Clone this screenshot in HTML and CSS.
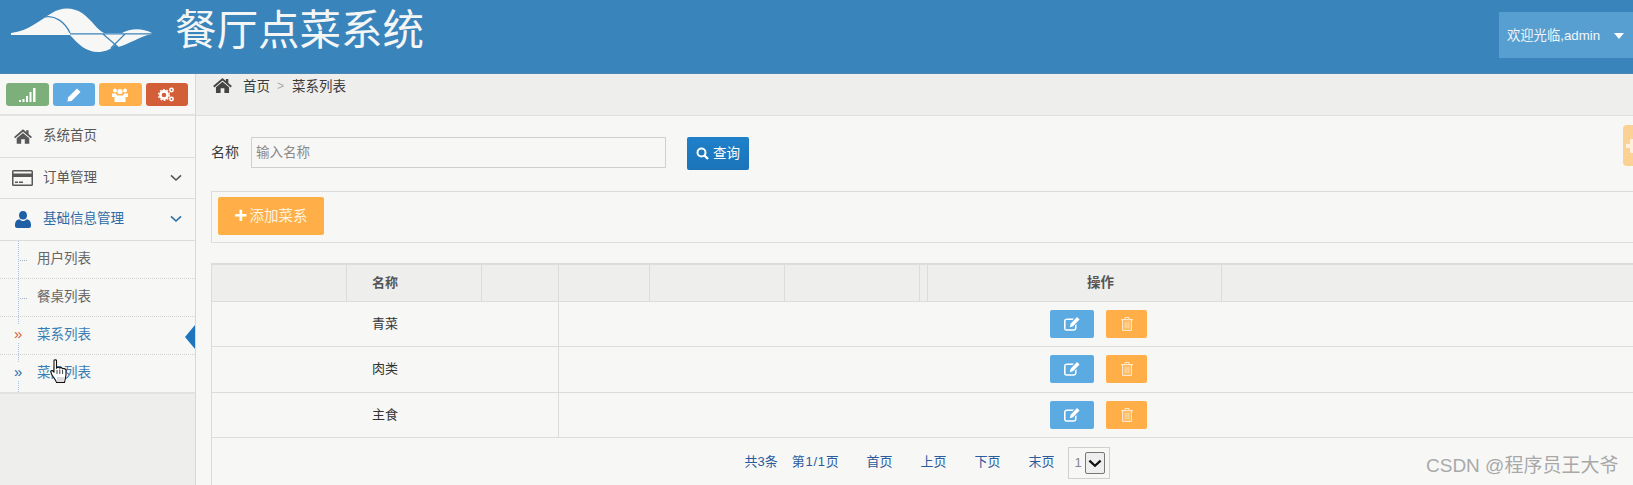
FILE: index.html
```html
<!DOCTYPE html>
<html lang="zh-CN">
<head>
<meta charset="utf-8">
<title>餐厅点菜系统</title>
<link rel="stylesheet" href="styles.css">
</head>
<body>
<svg class="sprites" width="0" height="0" aria-hidden="true">
  <symbol id="i-home" viewBox="0 0 20 16"><path d="M10 0 L13.6 3.1 V1 H16.2 V5.3 L20 8.6 L18.7 10 L10 2.6 L1.3 10 L0 8.6 Z M10 4 L17 9.9 V16 H12 V11 H8 V16 H3 V9.9 Z"/></symbol>
  <symbol id="i-card" viewBox="0 0 21 16"><path fill-rule="evenodd" d="M1.5 0 H19.5 A1.5 1.5 0 0 1 21 1.5 V14.5 A1.5 1.5 0 0 1 19.5 16 H1.5 A1.5 1.5 0 0 1 0 14.5 V1.5 A1.5 1.5 0 0 1 1.5 0 Z M1.5 1.5 V3.5 H19.5 V1.5 Z M1.5 7 V14.5 H19.5 V7 Z M3 11.5 H6 V13 H3 Z M7 11.5 H11 V13 H7 Z"/></symbol>
  <symbol id="i-user" viewBox="0 0 16 17"><path d="M8 0 C10.6 0 12 2 12 4.4 C12 6.6 10.8 8.6 8 8.6 C5.2 8.6 4 6.6 4 4.4 C4 2 5.4 0 8 0 Z M4.4 8.2 C5.4 9.4 6.6 10 8 10 C9.4 10 10.6 9.4 11.6 8.2 C14.2 8.6 16 10.4 16 13.4 V15 C16 16.2 15 17 14 17 H2 C1 17 0 16.2 0 15 V13.4 C0 10.4 1.8 8.6 4.4 8.2 Z"/></symbol>
  <symbol id="i-chev" viewBox="0 0 12 8"><path d="M1 1.4 L6 6 L11 1.4" fill="none" stroke="currentColor" stroke-width="1.6"/></symbol>
  <symbol id="i-edit" viewBox="0 0 16 14"><path d="M2.5 1.5 H10 L8.6 3 H2.8 A1 1 0 0 0 1.6 4 V11 A1 1 0 0 0 2.8 12.2 H10 A1 1 0 0 0 11 11 V8.4 L12.5 7 V11 A2.6 2.6 0 0 1 10 13.7 H2.6 A2.6 2.6 0 0 1 0 11 V4 A2.6 2.6 0 0 1 2.5 1.5 Z M13 0 L15.6 2.5 L9 9.3 L5.8 10.2 L6.6 6.8 Z"/></symbol>
  <symbol id="i-trash" viewBox="0 0 12 14"><path fill-rule="evenodd" d="M4 0 H8 L9 2 H12 V3.2 H11 V12.4 C11 13.4 10.4 14 9.6 14 H2.4 C1.6 14 1 13.4 1 12.4 V3.2 H0 V2 H3 Z M4.6 1 L4.2 2 H7.8 L7.4 1 Z M2.2 3.2 V12.8 H9.8 V3.2 Z M3.6 4.6 H4.6 V11.6 H3.6 Z M5.5 4.6 H6.5 V11.6 H5.5 Z M7.4 4.6 H8.4 V11.6 H7.4 Z"/></symbol>
</svg>

<header class="topbar">
  <div class="brand">
    <svg class="logo" viewBox="0 0 141 45" aria-hidden="true">
      <path class="logo-fill" d="M0 25 C18 23 30 11 41 5 C50 -1 62 -1 71 5 C81 12 86 22 93 25 H111 C118 21 130 19 141 25 V26 C129 28 119 36 107 39 L104 37 C99 42 93 44 87 44 C75 44 67 36 59 27 H0 Z"/>
      <path class="logo-line" d="M34 9 C44 7 54 14 59 25 M59 25.8 H141 M92 26 L107 39 M114 26 L100 40"/>
    </svg>
    <h1 class="title">餐厅点菜系统</h1>
  </div>
  <div class="user-menu"><span>欢迎光临,admin</span><i class="caret"></i></div>
</header>

<div class="layout">
  <aside class="sidebar">
    <div class="shortcuts">
      <button class="sc sc-green" type="button" aria-label="统计">
        <svg width="17" height="14" viewBox="0 0 17 14"><path d="M0 12h2v2H0zM3.500 11h2v3h-2zM7 8h2v6H7zM10.500 4h2v10h-2zM14 0h2.500v14H14z"/></svg>
      </button>
      <button class="sc sc-blue" type="button" aria-label="编辑">
        <svg width="14" height="14" viewBox="0 0 14 14"><path d="M10 .5 L13.500 4 L4.500 13 L.5 13.500 L1 9.500 Z"/></svg>
      </button>
      <button class="sc sc-orange" type="button" aria-label="用户">
        <svg width="16" height="14" viewBox="0 0 16 14"><circle cx="3" cy="2.500" r="2"/><circle cx="13" cy="2.500" r="2"/><circle cx="8" cy="3.500" r="2.600"/><path d="M0 5.500h4l1 2h6l1-2h4v3.500h-2.500V14H2.500V9H0z"/></svg>
      </button>
      <button class="sc sc-red" type="button" aria-label="设置">
        <svg width="17" height="15" viewBox="0 0 17 15"><circle cx="6" cy="8" r="3.600" fill="none" stroke="#fff" stroke-width="2.600"/><circle cx="6" cy="8" r="5.400" fill="none" stroke="#fff" stroke-width="1.300" stroke-dasharray="1.800 1.600"/><circle cx="13.500" cy="3" r="1.700" fill="none" stroke="#fff" stroke-width="1.500"/><circle cx="13.500" cy="12" r="1.700" fill="none" stroke="#fff" stroke-width="1.500"/></svg>
      </button>
    </div>
    <nav class="nav">
      <a class="nav-item"><span class="nav-icon"><svg width="18" height="15"><use href="#i-home"/></svg></span><span class="nav-text">系统首页</span></a>
      <a class="nav-item"><span class="nav-icon"><svg width="21" height="16"><use href="#i-card"/></svg></span><span class="nav-text">订单管理</span><svg class="chev" width="12" height="8"><use href="#i-chev"/></svg></a>
      <a class="nav-item is-open"><span class="nav-icon"><svg width="16" height="17"><use href="#i-user"/></svg></span><span class="nav-text">基础信息管理</span><svg class="chev" width="12" height="8"><use href="#i-chev"/></svg></a>
      <ul class="subnav">
        <li class="sub-item"><i class="tick"></i>用户列表</li>
        <li class="sub-item"><i class="tick"></i>餐桌列表</li>
        <li class="sub-item is-active"><i class="dbl">»</i>菜系列表</li>
        <li class="sub-item is-link"><i class="dbl">»</i>菜品列表</li>
      </ul>
    </nav>
  </aside>

  <main class="main">
    <div class="crumbs">
      <svg class="crumb-home" width="19" height="15"><use href="#i-home"/></svg>
      <span>首页</span><span class="crumb-sep">&gt;</span><span>菜系列表</span>
    </div>
    <div class="content">
      <form class="search">
        <label class="search-label" for="q">名称</label>
        <input class="search-input" id="q" placeholder="输入名称">
        <button class="btn-query" type="button">
          <svg width="13" height="13" viewBox="0 0 13 13"><circle cx="5.500" cy="5.500" r="4" fill="none" stroke="#fff" stroke-width="2"/><path d="M8.500 8.500 L12 12" stroke="#fff" stroke-width="2.400"/></svg>查询
        </button>
      </form>
      <div class="toolbar">
        <button class="btn-add" type="button"><span class="plus">+</span>添加菜系</button>
      </div>
      <div class="table">
        <div class="thead">
          <div class="th"></div>
          <div class="th th-name">名称</div>
          <div class="th"></div>
          <div class="th"></div>
          <div class="th"></div>
          <div class="th"></div>
          <div class="th"></div>
          <div class="th th-op">操作</div>
          <div class="th"></div>
        </div>
        <div class="tr tr-a">
          <div class="td-name">青菜</div>
          <div class="td-op">
            <button class="op op-edit" type="button" aria-label="编辑"><svg width="16" height="14"><use href="#i-edit"/></svg></button>
            <button class="op op-del" type="button" aria-label="删除"><svg width="12" height="14"><use href="#i-trash"/></svg></button>
          </div>
        </div>
        <div class="tr tr-b">
          <div class="td-name">肉类</div>
          <div class="td-op">
            <button class="op op-edit" type="button" aria-label="编辑"><svg width="16" height="14"><use href="#i-edit"/></svg></button>
            <button class="op op-del" type="button" aria-label="删除"><svg width="12" height="14"><use href="#i-trash"/></svg></button>
          </div>
        </div>
        <div class="tr tr-c">
          <div class="td-name">主食</div>
          <div class="td-op">
            <button class="op op-edit" type="button" aria-label="编辑"><svg width="16" height="14"><use href="#i-edit"/></svg></button>
            <button class="op op-del" type="button" aria-label="删除"><svg width="12" height="14"><use href="#i-trash"/></svg></button>
          </div>
        </div>
        <div class="pager">
          <span class="pg-count">共3条</span>
          <span class="pg-page">第1/1页</span>
          <a class="pg-link">首页</a>
          <a class="pg-link">上页</a>
          <a class="pg-link">下页</a>
          <a class="pg-link">末页</a>
          <span class="pg-select"><span class="pg-val">1</span><span class="pg-btn"><svg width="14" height="9" viewBox="0 0 12 8"><path d="M1 1.400 L6 6 L11 1.400" fill="none" stroke="#111" stroke-width="2"/></svg></span></span>
        </div>
      </div>
    </div>
  </main>
</div>

<div class="side-tab"><span class="side-tab-mark"></span></div>
<svg class="cursor" width="20" height="25" viewBox="0 0 20 25" aria-hidden="true"><path d="M4 1.500 C4 .5 6.500 .5 6.500 1.500 V9 C7.500 8 9 8 9.500 9 C10.500 8.300 12 8.500 12.500 9.800 C13.500 9.200 15.500 9.500 16 11 V15 C16 18 15 20 14.500 23.500 H6.500 C6 21 4 19.500 2 16 L.8 13 C.5 11.500 2.500 11 3.500 12.500 L4 13.500 Z" fill="#fff" stroke="#111" stroke-width="1.100"/><path d="M7 23 V18 H14.500 L14 23 Z" fill="#ddd"/><path d="M7 11 V15 M9.800 10.500 V15 M12.600 11 V15" stroke="#111" stroke-width=".8"/></svg>
<div class="watermark">CSDN @程序员王大爷</div>
</body>
</html>
```

FILE: styles.css
```css
* { box-sizing: border-box; }
html, body { margin: 0; height: 485px; overflow: hidden; }
body {
  position: relative;
  width: 1633px;
  background: #f7f7f5;
  color: #444;
  font: 13.5px/1.3 "Liberation Sans", "Noto Sans CJK SC", sans-serif;
}
.sprites { position: absolute; }
button { font: inherit; border: 0; padding: 0; }

/* header */
.topbar {
  height: 74px;
  padding: 8px 0 0 11px;
  background: #3a84bc;
  border-bottom: 1px solid #4a87b4;
  display: flex;
  justify-content: space-between;
  align-items: flex-start;
}
.brand { display: flex; align-items: flex-start; gap: 23px; }
.logo { width: 141px; height: 45px; flex: none; overflow: visible; }
.logo-fill { fill: #f7f7f5; }
.logo-line { fill: none; stroke: #3a84bc; stroke-width: 1.2; }
.title {
  margin: -7px 0 0;
  font-size: 41.500px;
  font-weight: 400;
  line-height: 60px;
  color: #f4f6f6;
}
.user-menu {
  margin-top: 4px;
  width: 134px;
  height: 46px;
  padding-left: 8px;
  padding-top: 2px;
  background: #569fd0;
  color: #f2f6f8;
  font-size: 13.300px;
  display: flex;
  align-items: center;
  gap: 14px;
}
.caret {
  width: 0; height: 0;
  border-left: 5.500px solid transparent;
  border-right: 5.500px solid transparent;
  border-top: 6px solid #fff;
}

/* layout */
.layout { display: flex; height: 411px; }

/* sidebar */
.sidebar {
  width: 196px;
  flex: none;
  background: #eeeeec;
  border-right: 1px solid #d8d8d6;
}
.shortcuts {
  height: 42px;
  padding: 9px 7px 0 6px;
  display: flex;
  justify-content: space-between;
  background: #f7f7f5;
  border-bottom: 2px solid #e2e2e0;
}
.sc {
  width: 42.500px;
  height: 23px;
  border-radius: 3px;
  display: flex;
  align-items: center;
  justify-content: center;
  fill: #fff;
}
.sc-green { background: #7daf7b; }
.sc-blue { background: #5faae0; }
.sc-orange { background: #ffb04a; }
.sc-red { background: #d35f38; }
.nav { background: #f7f7f5; border-bottom: 2px solid #e2e2e0; }
.nav-item {
  height: 41.500px;
  padding: 0 13px 0 12px;
  display: flex;
  align-items: center;
  color: #585858;
  fill: #585858;
  border-bottom: 1.500px solid #dcdcda;
}
.nav-icon { width: 31px; display: flex; justify-content: center; margin-left: -1px; margin-right: 1px; padding-right: 8px; }
.nav-text { flex: 1; }
.chev { color: #555; }
.is-open { color: #2a6ca8; fill: #1f5fa5; }
.is-open .chev { color: #2a6ca8; }
.subnav { position: relative; margin: 0; padding: 0; list-style: none; }
.subnav::before {
  content: "";
  position: absolute;
  left: 18px; top: 0; bottom: 0;
  border-left: 1px dotted #a9c4de;
}
.sub-item {
  position: relative;
  height: 38px;
  padding-left: 37px;
  display: flex;
  align-items: center;
  color: #666;
  border-bottom: 1px dotted #d4d4d2;
}
.sub-item:last-child { height: 37px; border-bottom: 0; }
.tick {
  position: absolute;
  left: 20px; top: 19px;
  width: 7px;
  border-top: 1px dotted #a2b2c2;
}
.dbl {
  position: absolute;
  left: 14px; top: 8px;
  font-style: normal;
  font-size: 15px;
  background: #f7f7f5;
  line-height: 18px;
}
.is-active, .is-link { color: #3a7db5; }
.is-active .dbl { color: #d2603c; }
.is-link .dbl { color: #2a6ca8; }
.is-active::after {
  content: "";
  position: absolute;
  right: 0; top: 8px;
  border-top: 12px solid transparent;
  border-bottom: 12px solid transparent;
  border-right: 10px solid #1f75bd;
}

/* main */
.main { flex: 1; min-width: 0; }
.crumbs {
  height: 42px;
  padding: 3px 0 0 17px;
  display: flex;
  align-items: flex-start;
  line-height: 19px;
  background: #eeeeec;
  border-bottom: 1px solid #dedede;
  color: #3c3c3c;
}
.crumb-home { fill: #444; margin: 1px 11px 0 0; }
.crumb-sep { margin: 0 8px 0 7px; color: #aaa; font-size: 12px; }
.content { padding: 21px 0 0 15px; }

.search { display: flex; align-items: flex-start; height: 33px; }
.search-label { width: 40px; color: #3c3c3c; font-size: 14px; line-height: 31px; }
.search-input {
  width: 415px;
  height: 31px;
  padding: 0 4px;
  background: #f7f7f5;
  border: 1.500px solid #d0d0ce;
  font: inherit;
  outline: 0;
}
.search-input::placeholder { color: #8a8a8a; opacity: 1; }
.btn-query {
  margin-left: 21px;
  width: 62px;
  height: 33px;
  display: flex;
  align-items: center;
  justify-content: center;
  gap: 4px;
  color: #fff;
  border-radius: 2px;
  background: linear-gradient(#1f80ca, #1b74b8);
}
.toolbar {
  margin-top: 21px;
  height: 52px;
  padding: 5px 6px;
  border: 1px solid #dcdcda;
  border-right: 0;
}
.btn-add {
  width: 106px;
  height: 38px;
  border-radius: 2px;
  background: #ffae48;
  color: #fdf3df;
  font-size: 14.500px;
  display: flex;
  align-items: center;
  justify-content: center;
  gap: 2px;
}
.plus { font-size: 22px; font-weight: 700; line-height: 20px; color: #fff; }

.table { margin-top: 20px; border-left: 1px solid #dcdcda; }
.thead {
  height: 39px;
  display: grid;
  grid-template-columns: 135px 135px 77px 91px 135px 135px 8px 294px 1fr;
  background: #eeeeec;
  border-top: 2px solid #dcdcda;
  border-bottom: 1.500px solid #dcdcda;
}
.th { border-right: 1px solid #dcdcda; color: #555; font-weight: 700; font-size: 13px; line-height: 35px; }
.th:last-child { border-right: 0; }
.th-name { padding-left: 25px; }
.th-op { padding-left: 159px; font-size: 13.500px; }

.tr { display: grid; grid-template-columns: 347px 1fr; border-bottom: 1.500px solid #dcdcda; }
.tr-a { height: 45px; }
.tr-b { height: 46px; }
.tr-c { height: 45px; }
.td-name {
  padding-left: 160px;
  border-right: 1px solid #dcdcda;
  display: flex;
  align-items: center;
  color: #333;
  font-size: 13px;
}
.td-op { padding: 7.500px 0 0 491px; display: flex; gap: 12.500px; align-items: flex-start; }
.op {
  height: 28px;
  border-radius: 2px;
  display: flex;
  align-items: center;
  justify-content: center;
  fill: #fff;
}
.op-edit { width: 43.500px; background: #5caae2; }
.op-del { width: 41px; background: #ffae48; fill: #fde8c8; }

.pager {
  height: 60px;
  padding: 9px 0 0 10px;
  display: flex;
  justify-content: center;
  align-items: flex-start;
  color: #2a5b9c;
  font-size: 13px;
  line-height: 30px;
}
.pg-count { margin-right: 14px; }
.pg-page { margin-right: 27px; letter-spacing: .7px; }
.pg-link { margin-right: 28px; }
.pg-link:last-of-type { margin-right: 14px; }
.pg-select {
  width: 42px;
  height: 32px;
  padding: 3px 0 0 5px;
  border: 1px solid #d0d0ce;
  display: flex;
  align-items: center;
  gap: 3px;
  color: #888;
}
.pg-val { margin-top: -3px; }
.pg-btn {
  width: 20px;
  height: 22px;
  margin-top: -3px;
  border: 1px solid #777;
  border-radius: 2px;
  background: #eee;
  display: flex;
  align-items: center;
  justify-content: center;
}

/* overlays */
.side-tab {
  position: absolute;
  right: 0; top: 125px;
  width: 10px; height: 41px;
  border-radius: 4px 0 0 4px;
  background: #fbd294;
  display: flex;
  align-items: center;
  justify-content: flex-end;
}
.side-tab-mark {
  width: 7px;
  height: 14px;
  background:
    linear-gradient(#fdf1de, #fdf1de) 0 50% / 100% 4px no-repeat,
    linear-gradient(#fdf1de, #fdf1de) 100% 0 / 3px 100% no-repeat;
}
.cursor { position: absolute; left: 50px; top: 359px; }
.watermark {
  position: absolute;
  left: 1426px; top: 453px;
  font-size: 19px;
  line-height: 26px;
  color: #a8a8a8;
  text-shadow: 0 0 1px #fff;
  white-space: nowrap;
}
```
